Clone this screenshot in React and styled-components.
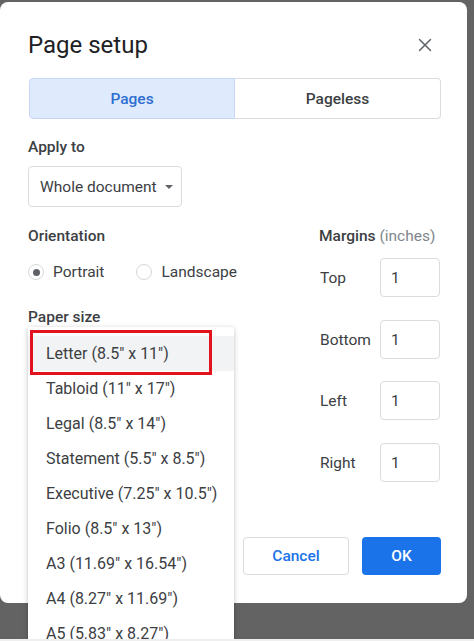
import React from "react";
import styled, { createGlobalStyle, css } from "styled-components";
import { X } from "lucide-react";

const GlobalStyle = createGlobalStyle`
  html, body {
    margin: 0;
    padding: 0;
    background: #efefef;
    font-family: Roboto, "Liberation Sans", Arial, sans-serif;
  }
`;

const Backdrop = styled.div`
  width: 474px;
  height: 639px;
  background: #636363;
  overflow: hidden;
  padding-top: 2px;
  box-sizing: border-box;
`;

const Dialog = styled.div`
  width: 467px;
  height: 601px;
  background: #fff;
  border-radius: 8px;
  box-sizing: border-box;
  padding: 28px 26px 28px 28px;
  display: flex;
  flex-direction: column;
  color: #3c4043;
`;

const Header = styled.div`
  display: flex;
  align-items: center;
  justify-content: space-between;
  height: 30px;
`;

const Title = styled.h1`
  margin: 0;
  font-size: 24px;
  font-weight: 400;
  color: #202124;
  line-height: 30px;
`;

const CloseButton = styled.button`
  border: 0;
  background: none;
  padding: 0;
  margin-right: 5px;
  color: #5f6368;
  display: flex;
`;

const Tabs = styled.div`
  display: grid;
  grid-template-columns: 1fr 1fr;
  margin: 18px 0 0 1px;
  height: 41px;
`;

const Tab = styled.div`
  display: flex;
  align-items: center;
  justify-content: center;
  font-size: 15.5px;
  font-weight: 500;
  border: 1px solid #dadce0;
  ${(p) =>
    p.$active
      ? css`
          background: #dfeafd;
          border-color: #c6d8f6;
          color: #2f6fd0;
          border-radius: 4px 0 0 4px;
        `
      : css`
          background: #fff;
          color: #3c4043;
          border-left: 0;
          border-radius: 0 4px 4px 0;
        `}
`;

const Label = styled.div`
  font-size: 15.5px;
  font-weight: 500;
  line-height: 20px;
  margin-top: ${(p) => p.$top || 0}px;
  color: #3c4043;
`;

const Muted = styled.span`
  color: #80868b;
  font-weight: 400;
`;

const Select = styled.div`
  margin-top: 9px;
  width: 154px;
  height: 41px;
  box-sizing: border-box;
  border: 1px solid #dadce0;
  border-radius: 4px;
  display: flex;
  align-items: center;
  padding-left: 11px;
  gap: 8px;
  font-size: 15.5px;
`;

const Caret = styled.span`
  width: 0;
  height: 0;
  border-left: 4px solid transparent;
  border-right: 4px solid transparent;
  border-top: 4px solid #5f6368;
`;

const Columns = styled.div`
  display: flex;
  justify-content: space-between;
  margin-top: 19px;
`;

const LeftCol = styled.div`
  display: flex;
  flex-direction: column;
  width: 206px;
`;

const RightCol = styled.div`
  display: flex;
  flex-direction: column;
  width: 122px;
`;

const RadioRow = styled.div`
  display: flex;
  align-items: center;
  margin-top: 16px;
  height: 20px;
  font-size: 15.5px;
`;

const RadioOption = styled.label`
  display: flex;
  align-items: center;
  gap: 9px;
  margin-right: 32px;
`;

const RadioCircle = styled.span`
  width: 16px;
  height: 16px;
  box-sizing: border-box;
  border: 1px solid #d5d7da;
  border-radius: 50%;
  display: flex;
  align-items: center;
  justify-content: center;
  &::after {
    content: "";
    width: 7px;
    height: 7px;
    border-radius: 50%;
    background: ${(p) => (p.$checked ? "#5f6368" : "transparent")};
  }
`;

const MenuAnchor = styled.div`
  position: relative;
`;

const Menu = styled.ul`
  position: absolute;
  top: 0;
  left: 0;
  width: 206px;
  margin: 0;
  padding: 9px 0 0;
  list-style: none;
  background: #fff;
  box-shadow: 0 1px 4px rgba(0, 0, 0, 0.18), 0 2px 8px rgba(0, 0, 0, 0.08);
  border-radius: 2px;
  z-index: 2;
`;

const MenuItem = styled.li`
  position: relative;
  height: 35px;
  display: flex;
  align-items: center;
  padding-left: 18px;
  font-size: 16px;
  color: #3c4043;
  background: ${(p) => (p.$selected ? "#f1f3f4" : "transparent")};
`;

const Highlight = styled.span`
  position: absolute;
  left: 2px;
  top: -6px;
  width: 182px;
  height: 45px;
  box-sizing: border-box;
  border: 3px solid #e2131f;
`;

const MarginRow = styled.div`
  display: flex;
  align-items: center;
  margin-top: ${(p) => p.$top}px;
  font-size: 15.5px;
`;

const MarginLabel = styled.span`
  width: 60px;
  padding-left: 1px;
`;

const MarginInput = styled.div`
  width: 60px;
  height: 39px;
  box-sizing: border-box;
  border: 1px solid #dadce0;
  border-radius: 4px;
  display: flex;
  align-items: center;
  padding-left: 10px;
`;

const Footer = styled.div`
  margin-top: auto;
  display: flex;
  justify-content: flex-end;
  gap: 13px;
`;

const Button = styled.button`
  height: 38px;
  border-radius: 4px;
  font-family: inherit;
  font-size: 15.5px;
  font-weight: 500;
  ${(p) =>
    p.$primary
      ? css`
          width: 79px;
          background: #1a73e8;
          color: #fff;
          border: 0;
        `
      : css`
          width: 106px;
          background: #fff;
          color: #1a73e8;
          border: 1px solid #dadce0;
        `}
`;

const sizes = [
  "Letter (8.5\" x 11\")",
  "Tabloid (11\" x 17\")",
  "Legal (8.5\" x 14\")",
  "Statement (5.5\" x 8.5\")",
  "Executive (7.25\" x 10.5\")",
  "Folio (8.5\" x 13\")",
  "A3 (11.69\" x 16.54\")",
  "A4 (8.27\" x 11.69\")",
  "A5 (5.83\" x 8.27\")",
];

const margins = [
  ["Top", 12],
  ["Bottom", 23],
  ["Left", 22],
  ["Right", 23],
];

export default function App() {
  return (
    <>
      <GlobalStyle />
      <Backdrop>
        <Dialog>
          <Header>
            <Title>Page setup</Title>
            <CloseButton>
              <X size={22} strokeWidth={1.6} />
            </CloseButton>
          </Header>

          <Tabs>
            <Tab $active>Pages</Tab>
            <Tab>Pageless</Tab>
          </Tabs>

          <Label $top={18}>Apply to</Label>
          <Select>
            Whole document <Caret />
          </Select>

          <Columns>
            <LeftCol>
              <Label>Orientation</Label>
              <RadioRow>
                <RadioOption>
                  <RadioCircle $checked />
                  Portrait
                </RadioOption>
                <RadioOption>
                  <RadioCircle />
                  Landscape
                </RadioOption>
              </RadioRow>
              <Label $top={25}>Paper size</Label>
              <MenuAnchor>
                <Menu>
                  {sizes.map((s, i) => (
                    <MenuItem key={s} $selected={i === 0}>
                      {s}
                      {i === 0 && <Highlight />}
                    </MenuItem>
                  ))}
                </Menu>
              </MenuAnchor>
            </LeftCol>

            <RightCol>
              <Label>
                Margins <Muted>(inches)</Muted>
              </Label>
              {margins.map(([name, top]) => (
                <MarginRow key={name} $top={top}>
                  <MarginLabel>{name}</MarginLabel>
                  <MarginInput>1</MarginInput>
                </MarginRow>
              ))}
            </RightCol>
          </Columns>

          <Footer>
            <Button>Cancel</Button>
            <Button $primary>OK</Button>
          </Footer>
        </Dialog>
      </Backdrop>
    </>
  );
}
